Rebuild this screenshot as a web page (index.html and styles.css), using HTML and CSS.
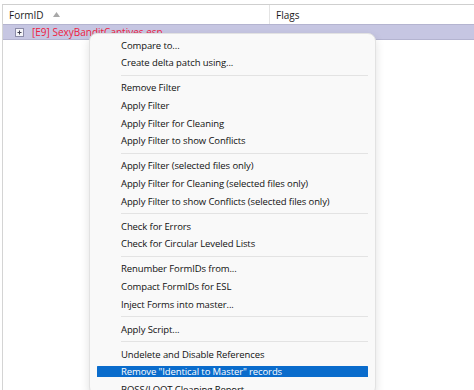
FILE: index.html
```html
<!DOCTYPE html>
<html lang="en">
<head>
    <meta charset="UTF-8">
    <meta name="viewport" content="width=device-width, initial-scale=1.0">
    <title>FormID view</title>
    <link rel="stylesheet" href="styles.css">
</head>
<body>

    <div class="tree">
        <div class="header">
            <div class="col col-id">
                FormID
                <svg class="sort" width="7" height="5" viewBox="0 0 7 5"><path d="M0 5 L3.5 0 L7 5 Z" fill="#a8a8a8"/></svg>
            </div>
            <div class="col col-flags">Flags</div>
        </div>
        <div class="row selected">
            <svg class="expander" width="9" height="9" viewBox="0 0 9 9">
                <rect x="0.5" y="0.5" width="8" height="8" fill="#f4f4f8" stroke="#8c8ca8"/>
                <path d="M2.5 4.5 H6.5 M4.5 2.5 V6.5" stroke="#404050"/>
            </svg>
            <span class="name">[E9] SexyBanditCaptives.esp</span>
        </div>
    </div>

    <!-- context menu -->
    <div class="menu">
        <div class="item">Compare to...</div>
        <div class="item">Create delta patch using...</div>
        <div class="sep"></div>
        <div class="item">Remove Filter</div>
        <div class="item">Apply Filter</div>
        <div class="item">Apply Filter for Cleaning</div>
        <div class="item">Apply Filter to show Conflicts</div>
        <div class="sep"></div>
        <div class="item">Apply Filter (selected files only)</div>
        <div class="item">Apply Filter for Cleaning (selected files only)</div>
        <div class="item">Apply Filter to show Conflicts (selected files only)</div>
        <div class="sep"></div>
        <div class="item">Check for Errors</div>
        <div class="item">Check for Circular Leveled Lists</div>
        <div class="sep"></div>
        <div class="item">Renumber FormIDs from...</div>
        <div class="item">Compact FormIDs for ESL</div>
        <div class="item">Inject Forms into master...</div>
        <div class="sep"></div>
        <div class="item">Apply Script...</div>
        <div class="sep"></div>
        <div class="item">Undelete and Disable References</div>
        <div class="item active">Remove "Identical to Master" records</div>
        <div class="item">BOSS/LOOT Cleaning Report</div>
    </div>

</body>
</html>
```

FILE: styles.css
```css
* {
    margin: 0;
    padding: 0;
    box-sizing: border-box;
}

html {
    height: 390px;
    overflow: hidden;
}

body {
    background: #ffffff;
    font-family: "Open Sans", "Noto Sans", sans-serif;
    font-size: 10px;
    color: #1b1b1b;
    height: 390px;
    overflow: hidden;
    padding-left: 2px;
    padding-top: 4px;
}

.tree {
    height: 100%;
    border-left: 1px solid #d4d4d4;
    border-top: 1px solid #cfcfcf;
}

.header {
    display: flex;
    height: 19px;
    background: #fff;
}

.col {
    display: flex;
    align-items: center;
    gap: 9px;
    padding-left: 6px;
}

.col-id {
    width: 267px;
    border-right: 1px solid #e4e4e4;
}

.col-flags {
    flex: 1;
}

.sort {
    margin-top: -1px;
}

.row {
    display: flex;
    align-items: center;
    height: 16px;
    padding-left: 12px;
    gap: 8px;
}

.selected {
    background: #c6c6e2;
    border-top: 1px solid #b4b4d0;
    border-bottom: 1px solid #b4b4d0;
}

.name {
    color: #ee2040;
}

.menu {
    position: absolute;
    left: 89px;
    top: 33px;
    width: 287px;
    height: 362px;
    background: #f9f9f9;
    border: 1px solid #e2e2e2;
    border-radius: 8px;
    box-shadow: 0 4px 10px rgba(0, 0, 0, 0.12);
    padding: 2.2px 7px 0;
    overflow: hidden;
    font-size: 9.5px;
    letter-spacing: -0.1px;
    color: #111;
}

.item {
    display: flex;
    align-items: center;
    height: 17.7px;
    padding-left: 24px;
    white-space: nowrap;
}

.item.active {
    background: linear-gradient(#f9f9f9 0 3.3px, #0a6ccc 3.3px 14.4px, #f9f9f9 14.4px);
    border-radius: 5px / 4px;
    color: #ffffff;
}

.sep {
    height: 7.3px;
    margin-left: 24px;
    display: flex;
    align-items: center;
}

.sep::after {
    content: "";
    flex: 1;
    border-top: 1px solid #e3e3e3;
}
```
